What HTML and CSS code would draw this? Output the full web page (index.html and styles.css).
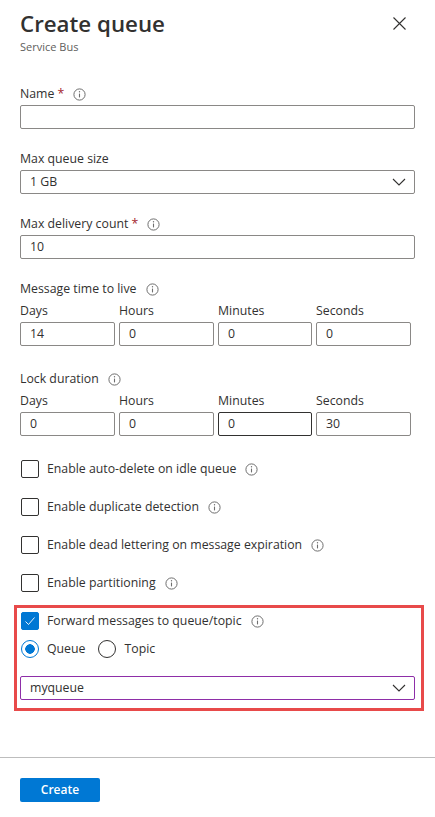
FILE: index.html
```html
<!DOCTYPE html>
<html lang="en">
<head>
  <meta charset="UTF-8" />
  <title>Create queue</title>
  <link rel="stylesheet" href="styles.css">
</head>
<body>
  <svg class="defs" width="0" height="0">
    <symbol id="info" viewBox="0 0 13 13">
      <circle cx="6.5" cy="6.5" r="5.6" fill="none" stroke="#6e6e6e" stroke-width="1"/>
      <path d="M6.5 5.6v3.8" stroke="#6e6e6e" stroke-width="1.1"/>
      <circle cx="6.5" cy="3.8" r=".7" fill="#6e6e6e"/>
    </symbol>
    <symbol id="chevron" viewBox="0 0 14 8">
      <path d="M1 1l6 6 6-6" fill="none" stroke="#323130" stroke-width="1.1"/>
    </symbol>
  </svg>

  <header class="header">
    <div>
      <h1>Create queue</h1>
      <p class="subtitle">Service Bus</p>
    </div>
    <button class="close" aria-label="Close">
      <svg width="13" height="13" viewBox="0 0 13 13"><path d="M.5.5l12 12M12.5.5l-12 12" stroke="#323130" stroke-width="1.1"/></svg>
    </button>
  </header>

  <main class="form">
    <div class="field">
      <div class="label">Name <span class="req">*</span><svg class="info"><use href="#info"/></svg></div>
      <div class="input"></div>
    </div>

    <div class="field">
      <div class="label">Max queue size</div>
      <div class="input select">1 GB<svg class="chevron"><use href="#chevron"/></svg></div>
    </div>

    <div class="field">
      <div class="label">Max delivery count <span class="req">*</span><svg class="info"><use href="#info"/></svg></div>
      <div class="input">10</div>
    </div>

    <div class="field">
      <div class="label">Message time to live<svg class="info"><use href="#info"/></svg></div>
      <div class="times">
        <div><div class="sublabel">Days</div><div class="input">14</div></div>
        <div><div class="sublabel">Hours</div><div class="input">0</div></div>
        <div><div class="sublabel">Minutes</div><div class="input">0</div></div>
        <div><div class="sublabel">Seconds</div><div class="input">0</div></div>
      </div>
    </div>

    <div class="field lock">
      <div class="label">Lock duration<svg class="info"><use href="#info"/></svg></div>
      <div class="times">
        <div><div class="sublabel">Days</div><div class="input">0</div></div>
        <div><div class="sublabel">Hours</div><div class="input">0</div></div>
        <div><div class="sublabel">Minutes</div><div class="input hover">0</div></div>
        <div><div class="sublabel">Seconds</div><div class="input">30</div></div>
      </div>
    </div>

    <div class="checks">
      <div class="check"><span class="box"></span>Enable auto-delete on idle queue<svg class="info"><use href="#info"/></svg></div>
      <div class="check"><span class="box"></span>Enable duplicate detection<svg class="info"><use href="#info"/></svg></div>
      <div class="check"><span class="box"></span>Enable dead lettering on message expiration<svg class="info"><use href="#info"/></svg></div>
      <div class="check"><span class="box"></span>Enable partitioning<svg class="info"><use href="#info"/></svg></div>
    </div>

    <div class="highlight">
      <div class="check"><span class="box checked"><svg width="12" height="12" viewBox="0 0 12 12"><path d="M1.5 6.5l3 3 6-7" fill="none" stroke="#fff" stroke-width=".9"/></svg></span>Forward messages to queue/topic<svg class="info"><use href="#info"/></svg></div>
      <div class="radios">
        <div class="radio"><span class="dot on"></span>Queue</div>
        <div class="radio"><span class="dot"></span>Topic</div>
      </div>
      <div class="input select picked">myqueue<svg class="chevron"><use href="#chevron"/></svg></div>
    </div>
  </main>

  <footer class="footer">
    <button class="create">Create</button>
  </footer>
</body>
</html>
```

FILE: styles.css
```css
* {
  margin: 0;
  padding: 0;
  box-sizing: border-box;
}

body {
  background: #fff;
  color: #323130;
  font-family: "Open Sans", "Noto Sans", sans-serif;
  font-size: 12.3px;
  line-height: 16px;
  width: 435px;
  height: 817px;
  overflow: hidden;
}

.defs {
  display: block;
  height: 0;
}

.header {
  display: flex;
  justify-content: space-between;
  padding: 8px 29px 0 20px;
}

h1 {
  font-size: 22.3px;
  font-weight: 600;
  line-height: 32px;
}

.subtitle {
  font-size: 11px;
  color: #605e5c;
  line-height: 14px;
}

.close {
  background: none;
  border: 0;
  height: 13px;
  margin-top: 9px;
}

.form {
  padding: 0 20px;
  margin-top: 31px;
}

.field {
  margin-bottom: 21px;
}

.label {
  display: flex;
  align-items: center;
  height: 16px;
  padding-top: 2px;
  margin-bottom: 4px;
  white-space: pre;
}

.req {
  color: #a4262c;
}

.info {
  width: 13px;
  height: 13px;
  margin-left: 9px;
  flex: none;
}

.input {
  display: flex;
  align-items: center;
  justify-content: space-between;
  height: 24px;
  padding: 0 9px;
  border: 1px solid #8a8886;
  border-radius: 2px;
  background: #fff;
}

.chevron {
  width: 14px;
  height: 8px;
  margin-right: -1px;
}

.times {
  display: grid;
  grid-template-columns: 95px 95px 94px 95px;
  gap: 4px;
  width: 391px;
  padding-top: 3px;
}

.sublabel {
  height: 16px;
  margin-bottom: 3px;
}

.lock {
  margin-top: 24px;
}

.hover {
  border-color: #323130;
}

.checks {
  padding-top: 3px;
}

.check {
  display: flex;
  align-items: center;
  height: 18px;
  margin-bottom: 20px;
  white-space: pre;
}

.box {
  width: 18px;
  height: 18px;
  margin: 0 8px 0 1px;
  border: 1px solid #323130;
  border-radius: 2px;
  flex: none;
}

.checked {
  display: flex;
  align-items: center;
  justify-content: center;
  background: #0078d4;
  border-color: #0078d4;
}

.highlight {
  margin: -7px -9px 0 -6px;
  padding: 4px 6px 8px 3px;
  height: 106px;
  border: 3px solid #e84a4a;
}

.highlight .check {
  margin-bottom: 10px;
}

.radios {
  display: flex;
  gap: 12px;
  height: 18px;
  margin-bottom: 18px;
}

.radio {
  display: flex;
  align-items: center;
}

.dot {
  width: 18px;
  height: 18px;
  margin: 0 8px 0 1px;
  border: 1px solid #323130;
  border-radius: 50%;
}

.dot.on {
  border-color: #0078d4;
  background: radial-gradient(circle, #0078d4 0 4.5px, #fff 5px);
}

.picked {
  border-color: #8e2ea8;
}

.footer {
  margin-top: 46px;
  padding: 20px 20px 0;
  border-top: 1px solid #bdbdbd;
}

.create {
  display: block;
  width: 80px;
  height: 24px;
  background: #0078d4;
  color: #fff;
  border: 0;
  border-radius: 2px;
  font: 600 12px/24px "Open Sans", "Noto Sans", sans-serif;
}
```
